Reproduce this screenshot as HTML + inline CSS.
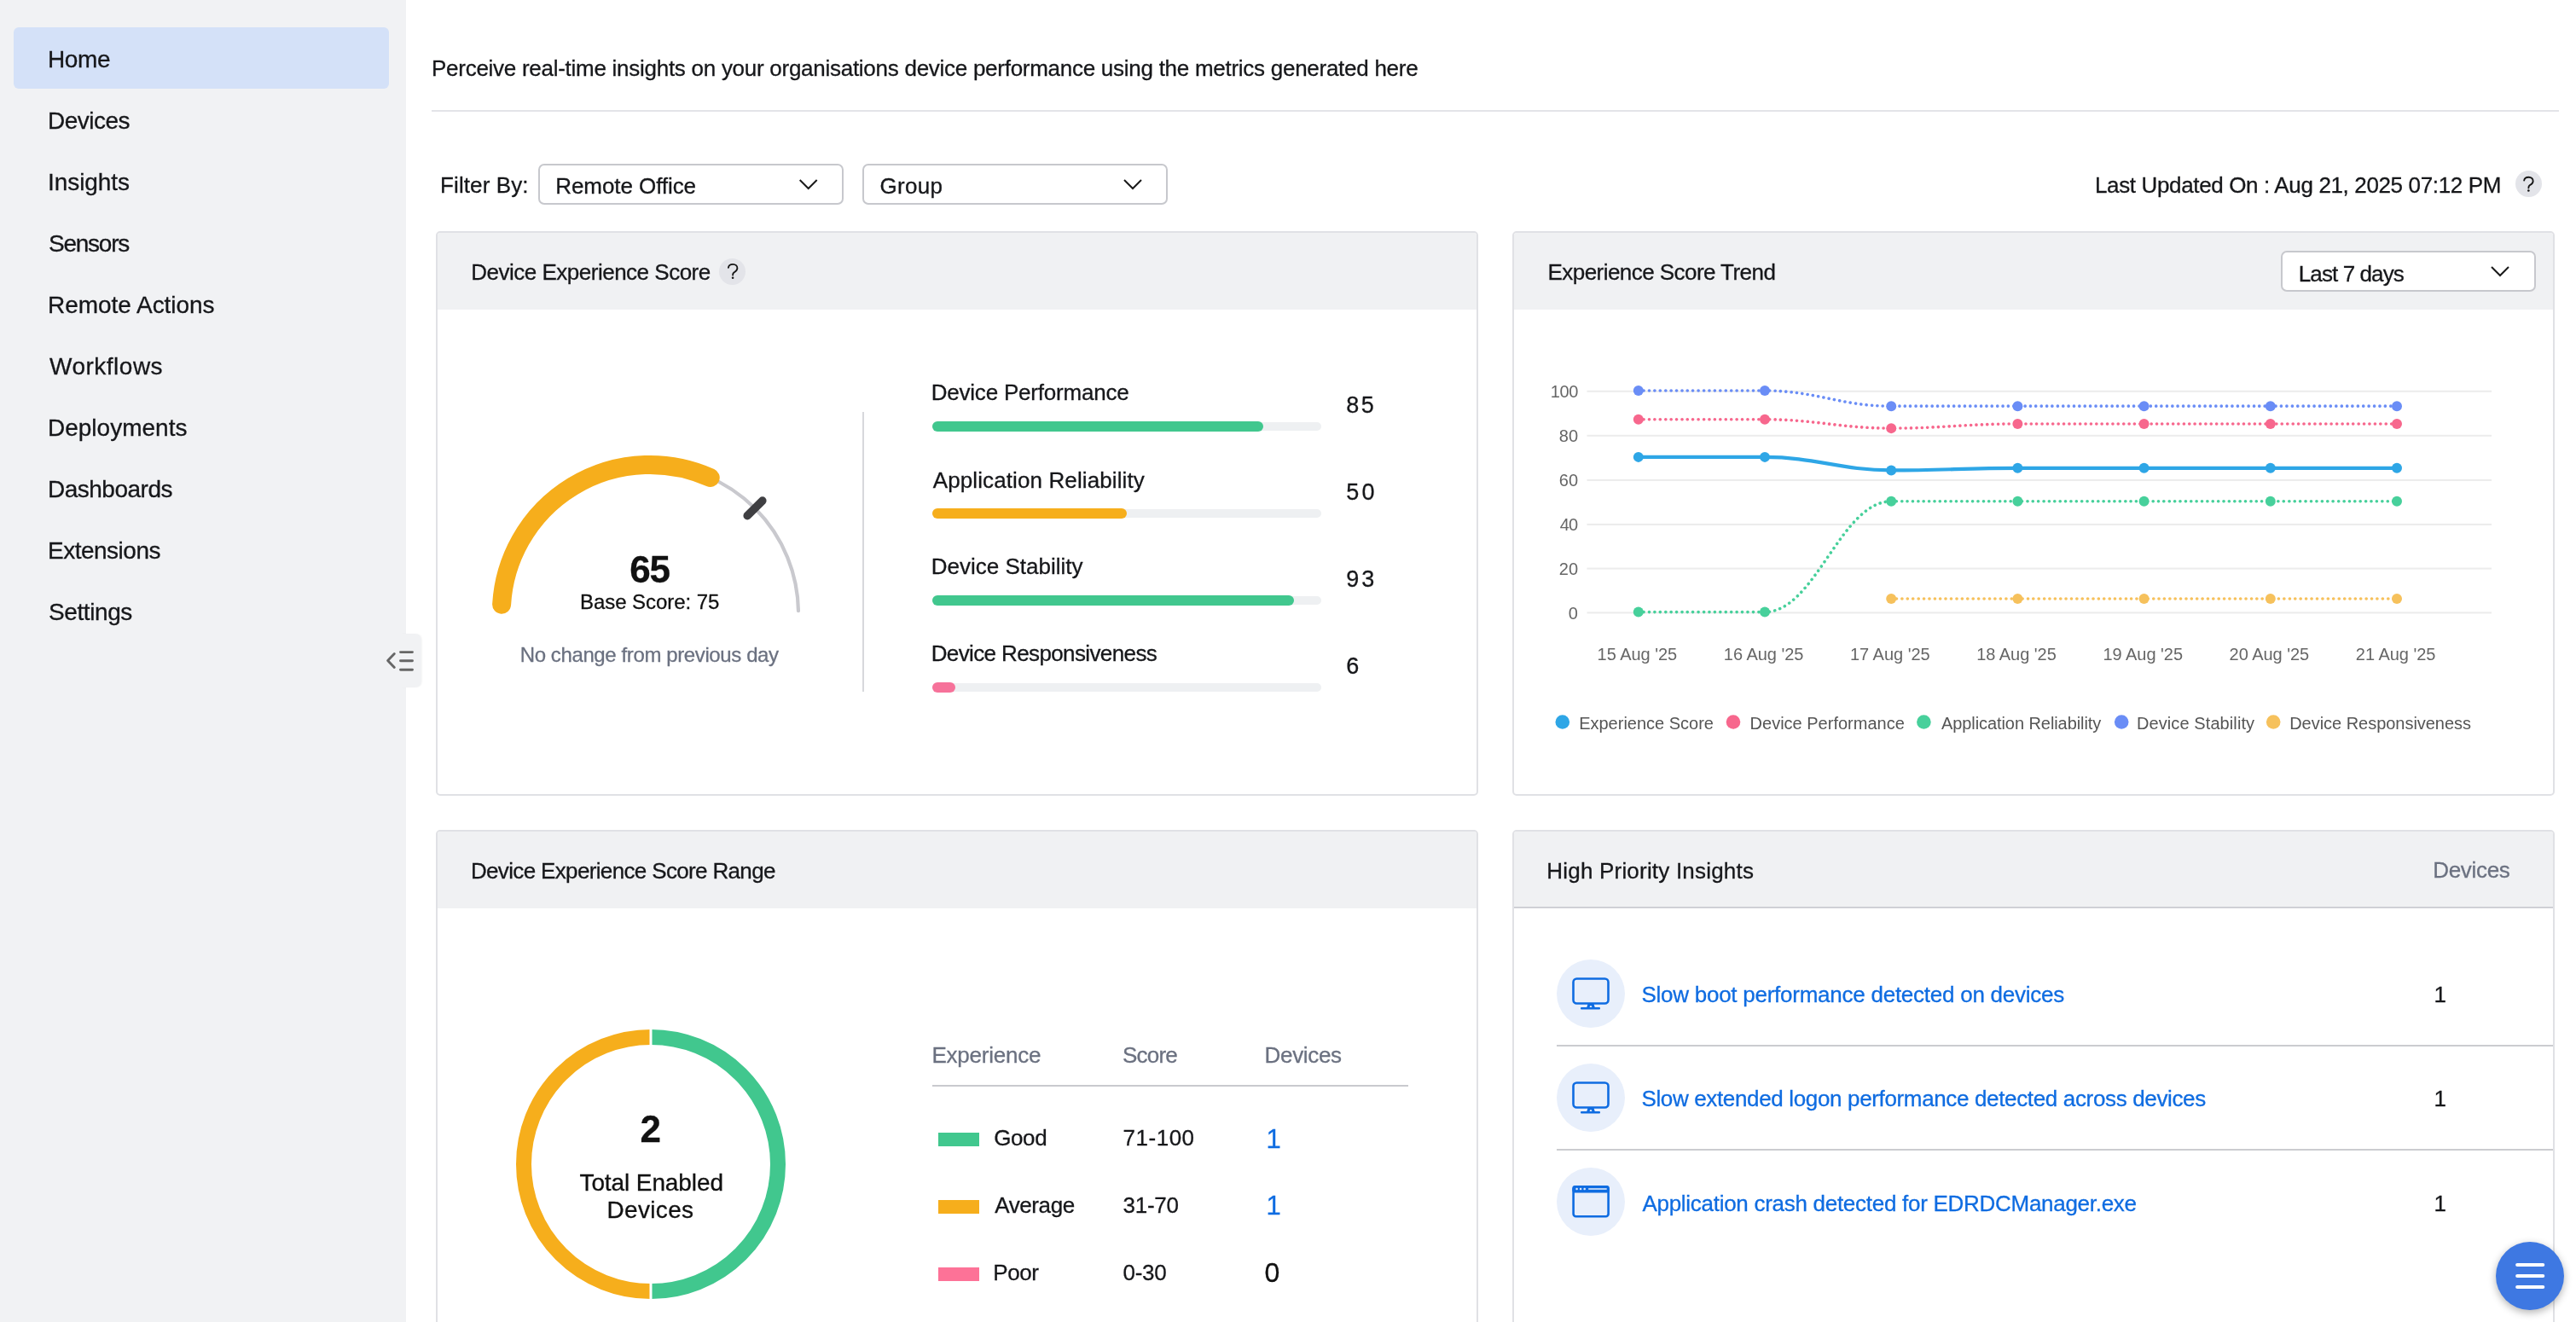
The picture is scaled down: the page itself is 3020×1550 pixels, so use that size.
<!DOCTYPE html>
<html><head><meta charset="utf-8"><title>Dashboard</title>
<style>
*{box-sizing:border-box;margin:0;padding:0}
html,body{width:3020px;height:1550px;overflow:hidden;background:#fff;font-family:"Liberation Sans", sans-serif}
.t{position:absolute;white-space:nowrap}
.a{position:absolute}
.card{position:absolute;border:2px solid #e0e1e5;border-radius:5px;background:#fff;overflow:hidden}
.hdr{position:absolute;left:0;top:0;right:0;background:#f0f1f3}
.dd{position:absolute;border:2px solid #c7c8cd;border-radius:7px;background:#fff}
.q{position:absolute;border-radius:50%;background:#e3e4e9;font-size:24px;line-height:31px;text-align:center;color:#222;width:31px;height:31px}
.track{position:absolute;height:10px;border-radius:5px;background:#eef0f2}
.fill{position:absolute;height:12px;border-radius:6px}
svg{position:absolute;left:0;top:0}
</style></head><body>
<!-- sidebar -->
<div class=a style="left:0;top:0;width:476px;height:1550px;background:#f1f2f4"></div>
<div class=a style="left:16px;top:32px;width:440px;height:72px;border-radius:6px;background:#d4e1f8"></div>
<div class=a style="left:470px;top:743px;width:24px;height:63px;border-radius:0 7px 7px 0;background:#f1f2f4;box-shadow:1px 0 2px rgba(0,0,0,0.04)"></div>
<!-- top line -->
<div class=a style="left:506px;top:129px;width:2494px;height:2px;background:#e3e4e8"></div>
<!-- dropdowns -->
<div class=dd style="left:631px;top:192px;width:358px;height:48px"></div>
<div class=dd style="left:1010.5px;top:191.5px;width:358.5px;height:48.5px"></div>
<div class=q style="left:2948.5px;top:200.3px"></div>
<!-- cards -->
<div class=card style="left:511px;top:271px;width:1222px;height:662px"><div class=hdr style="height:90px"></div></div>
<div class=card style="left:1773px;top:271px;width:1222px;height:662px"><div class=hdr style="height:90px"></div></div>
<div class=card style="left:511px;top:973px;width:1222px;height:600px"><div class=hdr style="height:90px"></div></div>
<div class=card style="left:1773px;top:973px;width:1222px;height:600px"><div class=hdr style="height:90px;border-bottom:2px solid #cfd0d5"></div></div>
<div class=dd style="left:2674px;top:293.5px;width:298.5px;height:48.5px"></div>
<div class=q style="left:843.2px;top:302.5px"></div>
<!-- divider in card1 -->
<div class=a style="left:1011px;top:483px;width:2px;height:328px;background:#d7d8dc"></div>
<!-- progress bars -->
<div class=track style="left:1093px;top:495px;width:456px"></div><div class=fill style="left:1093px;top:494px;width:388px;background:#41c78e"></div>
<div class=track style="left:1093px;top:597px;width:456px"></div><div class=fill style="left:1093px;top:596px;width:228px;background:#f6ae1c"></div>
<div class=track style="left:1093px;top:699px;width:456px"></div><div class=fill style="left:1093px;top:698px;width:424px;background:#41c78e"></div>
<div class=track style="left:1093px;top:801px;width:456px"></div><div class=fill style="left:1093px;top:800px;width:27px;background:#f6729a"></div>
<!-- table -->
<div class=a style="left:1093px;top:1272px;width:558px;height:2px;background:#c9cace"></div>
<div class=a style="left:1100px;top:1328px;width:48px;height:16px;background:#41c78e"></div>
<div class=a style="left:1100px;top:1407px;width:48px;height:16px;background:#f6ae1c"></div>
<div class=a style="left:1100px;top:1486px;width:48px;height:16px;background:#fd7297"></div>
<!-- insights -->
<div class=a style="left:1825px;top:1125px;width:80px;height:80px;border-radius:50%;background:#e8effb"></div>
<div class=a style="left:1825px;top:1247px;width:80px;height:80px;border-radius:50%;background:#e8effb"></div>
<div class=a style="left:1825px;top:1369px;width:80px;height:80px;border-radius:50%;background:#e8effb"></div>
<div class=a style="left:1825px;top:1225px;width:1168px;height:2px;background:#cbccd0"></div>
<div class=a style="left:1825px;top:1347px;width:1168px;height:2px;background:#cbccd0"></div>
<!-- FAB -->
<div class=a style="left:2926.2px;top:1455.8px;width:80px;height:80px;border-radius:50%;background:#3e78e2;box-shadow:0 3px 10px rgba(0,0,0,0.3)"></div>
<svg width="3020" height="1550" viewBox="0 0 3020 1550">
<path d='M937.7,211 L947.7,221 L957.7,211' fill='none' stroke='#1a1a1a' stroke-width='2'/>
<path d='M1318,211 L1328,221 L1338,211' fill='none' stroke='#1a1a1a' stroke-width='2'/>
<path d='M2921,313 L2931,323 L2941,313' fill='none' stroke='#1a1a1a' stroke-width='2'/>
<path d='M853.90,313.80 C854.20,311.20 856.60,309.90 859.30,309.90 C862.40,309.90 864.40,311.90 864.40,314.60 C864.40,317.40 861.90,318.40 860.40,319.50 C859.30,320.30 859.10,321.10 859.10,322.60' fill='none' stroke='#151515' stroke-width='1.85' stroke-linecap='round'/><circle cx='859.10' cy='325.70' r='1.3' fill='#151515'/>
<path d='M2959.15,211.60 C2959.45,209.00 2961.85,207.70 2964.55,207.70 C2967.65,207.70 2969.65,209.70 2969.65,212.40 C2969.65,215.20 2967.15,216.20 2965.65,217.30 C2964.55,218.10 2964.35,218.90 2964.35,220.40' fill='none' stroke='#151515' stroke-width='1.85' stroke-linecap='round'/><circle cx='2964.35' cy='223.50' r='1.3' fill='#151515'/>
<!-- collapse icon -->
<path d='M462.3,766.6 L454.6,774.4 L462.3,782.4' fill='none' stroke='#666' stroke-width='2.9' stroke-linecap='round' stroke-linejoin='round'/>
<path d='M469.5,764.6 H483.5 M469.5,774.8 H483.5 M469.5,785.2 H483.5' fill='none' stroke='#666' stroke-width='2.9' stroke-linecap='round'/>

<path d='M588.04,709.89 A174.1,174.1 0 0 1 935.98,716.27' fill='none' stroke='#c9c9ce' stroke-width='4.2' stroke-linecap='round'/>
<path d='M588.11,708.67 A174.1,174.1 0 0 1 832.71,559.95' fill='none' stroke='#f6ae1c' stroke-width='22' stroke-linecap='round'/>
<line x1='876.17' y1='604.73' x2='893.85' y2='587.05' stroke='#3f3f42' stroke-width='9.5' stroke-linecap='round'/>

<rect x='1860.5' y='457.8' width='1060.5' height='2' fill='#ececec'/>
<rect x='1860.5' y='509.8' width='1060.5' height='2' fill='#ececec'/>
<rect x='1860.5' y='561.9' width='1060.5' height='2' fill='#ececec'/>
<rect x='1860.5' y='613.9' width='1060.5' height='2' fill='#ececec'/>
<rect x='1860.5' y='665.6' width='1060.5' height='2' fill='#ececec'/>
<rect x='1860.5' y='717.4' width='1060.5' height='2' fill='#ececec'/>
<path d='M1920.80,458.00 C1920.80,458.00 2009.72,458.00 2069.00,458.00 C2128.28,458.00 2157.92,476.17 2217.20,476.17 C2276.48,476.17 2306.12,476.17 2365.40,476.17 C2424.68,476.17 2454.32,476.17 2513.60,476.17 C2572.88,476.17 2602.52,476.17 2661.80,476.17 C2721.08,476.17 2810.00,476.17 2810.00,476.17' fill='none' stroke='#6a8df6' stroke-width='3.6' stroke-linecap='round' stroke-dasharray='0.1 6.3'/>
<circle cx='1920.80' cy='458.00' r='6' fill='#6a8df6'/>
<circle cx='2069.00' cy='458.00' r='6' fill='#6a8df6'/>
<circle cx='2217.20' cy='476.17' r='6' fill='#6a8df6'/>
<circle cx='2365.40' cy='476.17' r='6' fill='#6a8df6'/>
<circle cx='2513.60' cy='476.17' r='6' fill='#6a8df6'/>
<circle cx='2661.80' cy='476.17' r='6' fill='#6a8df6'/>
<circle cx='2810.00' cy='476.17' r='6' fill='#6a8df6'/>
<path d='M1920.80,491.75 C1920.80,491.75 2009.72,491.75 2069.00,491.75 C2128.28,491.75 2157.92,502.13 2217.20,502.13 C2276.48,502.13 2306.12,496.94 2365.40,496.94 C2424.68,496.94 2454.32,496.94 2513.60,496.94 C2572.88,496.94 2602.52,496.94 2661.80,496.94 C2721.08,496.94 2810.00,496.94 2810.00,496.94' fill='none' stroke='#f7678d' stroke-width='3.6' stroke-linecap='round' stroke-dasharray='0.1 6.3'/>
<circle cx='1920.80' cy='491.75' r='6' fill='#f7678d'/>
<circle cx='2069.00' cy='491.75' r='6' fill='#f7678d'/>
<circle cx='2217.20' cy='502.13' r='6' fill='#f7678d'/>
<circle cx='2365.40' cy='496.94' r='6' fill='#f7678d'/>
<circle cx='2513.60' cy='496.94' r='6' fill='#f7678d'/>
<circle cx='2661.80' cy='496.94' r='6' fill='#f7678d'/>
<circle cx='2810.00' cy='496.94' r='6' fill='#f7678d'/>
<path d='M1920.80,535.88 C1920.80,535.88 2009.72,535.88 2069.00,535.88 C2128.28,535.88 2157.92,551.46 2217.20,551.46 C2276.48,551.46 2306.12,548.86 2365.40,548.86 C2424.68,548.86 2454.32,548.86 2513.60,548.86 C2572.88,548.86 2602.52,548.86 2661.80,548.86 C2721.08,548.86 2810.00,548.86 2810.00,548.86' fill='none' stroke='#2ea6e6' stroke-width='4.2'/>
<circle cx='1920.80' cy='535.88' r='6' fill='#2ea6e6'/>
<circle cx='2069.00' cy='535.88' r='6' fill='#2ea6e6'/>
<circle cx='2217.20' cy='551.46' r='6' fill='#2ea6e6'/>
<circle cx='2365.40' cy='548.86' r='6' fill='#2ea6e6'/>
<circle cx='2513.60' cy='548.86' r='6' fill='#2ea6e6'/>
<circle cx='2661.80' cy='548.86' r='6' fill='#2ea6e6'/>
<circle cx='2810.00' cy='548.86' r='6' fill='#2ea6e6'/>
<path d='M1920.80,717.60 C1920.80,717.60 2009.72,717.60 2069.00,717.60 C2128.28,717.60 2157.92,587.80 2217.20,587.80 C2276.48,587.80 2306.12,587.80 2365.40,587.80 C2424.68,587.80 2454.32,587.80 2513.60,587.80 C2572.88,587.80 2602.52,587.80 2661.80,587.80 C2721.08,587.80 2810.00,587.80 2810.00,587.80' fill='none' stroke='#47d09b' stroke-width='3.6' stroke-linecap='round' stroke-dasharray='0.1 6.3'/>
<circle cx='1920.80' cy='717.60' r='6' fill='#47d09b'/>
<circle cx='2069.00' cy='717.60' r='6' fill='#47d09b'/>
<circle cx='2217.20' cy='587.80' r='6' fill='#47d09b'/>
<circle cx='2365.40' cy='587.80' r='6' fill='#47d09b'/>
<circle cx='2513.60' cy='587.80' r='6' fill='#47d09b'/>
<circle cx='2661.80' cy='587.80' r='6' fill='#47d09b'/>
<circle cx='2810.00' cy='587.80' r='6' fill='#47d09b'/>
<path d='M2217.20,702.02 C2217.20,702.02 2306.12,702.02 2365.40,702.02 C2424.68,702.02 2454.32,702.02 2513.60,702.02 C2572.88,702.02 2602.52,702.02 2661.80,702.02 C2721.08,702.02 2810.00,702.02 2810.00,702.02' fill='none' stroke='#f6c15c' stroke-width='3.6' stroke-linecap='round' stroke-dasharray='0.1 6.3'/>
<circle cx='2217.20' cy='702.02' r='6' fill='#f6c15c'/>
<circle cx='2365.40' cy='702.02' r='6' fill='#f6c15c'/>
<circle cx='2513.60' cy='702.02' r='6' fill='#f6c15c'/>
<circle cx='2661.80' cy='702.02' r='6' fill='#f6c15c'/>
<circle cx='2810.00' cy='702.02' r='6' fill='#f6c15c'/>
<circle cx='1831.8' cy='846.5' r='8.3' fill='#2ea6e6'/>
<circle cx='2032' cy='846.5' r='8.3' fill='#f7678d'/>
<circle cx='2255.4' cy='846.5' r='8.3' fill='#47d09b'/>
<circle cx='2487.2' cy='846.5' r='8.3' fill='#6a8df6'/>
<circle cx='2665.2' cy='846.5' r='8.3' fill='#f6c15c'/>

<path d='M763,1216 A149,149 0 0 1 763,1514' fill='none' stroke='#41c78e' stroke-width='18'/>
<path d='M763,1514 A149,149 0 0 1 763,1216' fill='none' stroke='#f6ae1c' stroke-width='18'/>
<rect x='761.5' y='1204' width='3' height='24' fill='#fff'/>
<rect x='761.5' y='1502' width='3' height='24' fill='#fff'/>

<!-- monitor icons -->
<g fill='none' stroke='#0f6ce1' stroke-width='2.6'>
<rect x='1844.5' y='1147.5' width='41' height='29' rx='4'/>
<rect x='1844.5' y='1269.5' width='41' height='29' rx='4'/>
<rect x='1844.6' y='1391.2' width='41' height='35' rx='3'/>
</g>
<g fill='#0f6ce1'>
<rect x='1853' y='1181' width='23' height='2.6' rx='1'/>
<path d='M1861.5,1177 L1868.5,1177 L1870,1182 L1860,1182Z M1864.2,1179.2 L1865.8,1179.2 L1866.4,1181 L1863.6,1181Z' fill-rule='evenodd'/>
<rect x='1853' y='1303' width='23' height='2.6' rx='1'/>
<path d='M1861.5,1299 L1868.5,1299 L1870,1304 L1860,1304Z M1864.2,1301.2 L1865.8,1301.2 L1866.4,1303 L1863.6,1303Z' fill-rule='evenodd'/>
<rect x='1843.3' y='1390' width='43.5' height='8.5' rx='3'/>
</g>
<g fill='#dbe8fb'>
<circle cx='1848.6' cy='1394' r='1.3'/><circle cx='1853.1' cy='1394' r='1.3'/><circle cx='1857.7' cy='1394' r='1.3'/>
<rect x='1862.2' y='1393.2' width='21.5' height='1.6'/>
</g>
<!-- FAB lines -->
<path d='M2951.2,1483 H2981.2 M2951.2,1496 H2981.2 M2951.2,1509 H2981.2' stroke='#fff' stroke-width='4.2' stroke-linecap='round'/>
</svg>
<div style="position:absolute;left:0;top:0;width:3020px;height:1550px;will-change:transform">
<div class=t style="left:56.0px;top:56px;font-size:28px;line-height:28px;color:#16171a;letter-spacing:-0.37px;-webkit-text-stroke:0.3px #16171a">Home</div>
<div class=t style="left:56.0px;top:128px;font-size:28px;line-height:28px;color:#16171a;letter-spacing:-0.50px;-webkit-text-stroke:0.3px #16171a">Devices</div>
<div class=t style="left:56.0px;top:200px;font-size:28px;line-height:28px;color:#16171a;letter-spacing:-0.07px;-webkit-text-stroke:0.3px #16171a">Insights</div>
<div class=t style="left:57.0px;top:272px;font-size:28px;line-height:28px;color:#16171a;letter-spacing:-1.25px;-webkit-text-stroke:0.3px #16171a">Sensors</div>
<div class=t style="left:56.0px;top:344px;font-size:28px;line-height:28px;color:#16171a;letter-spacing:-0.04px;-webkit-text-stroke:0.3px #16171a">Remote Actions</div>
<div class=t style="left:58.0px;top:416px;font-size:28px;line-height:28px;color:#16171a;letter-spacing:0.50px;-webkit-text-stroke:0.3px #16171a">Workflows</div>
<div class=t style="left:56.0px;top:488px;font-size:28px;line-height:28px;color:#16171a;-webkit-text-stroke:0.3px #16171a">Deployments</div>
<div class=t style="left:56.0px;top:560px;font-size:28px;line-height:28px;color:#16171a;letter-spacing:-0.50px;-webkit-text-stroke:0.3px #16171a">Dashboards</div>
<div class=t style="left:56.0px;top:632px;font-size:28px;line-height:28px;color:#16171a;letter-spacing:-0.50px;-webkit-text-stroke:0.3px #16171a">Extensions</div>
<div class=t style="left:57.0px;top:704px;font-size:28px;line-height:28px;color:#16171a;letter-spacing:-0.41px;-webkit-text-stroke:0.3px #16171a">Settings</div>
<div class=t style="left:506.0px;top:67px;font-size:26px;line-height:26px;color:#16171a;letter-spacing:-0.27px;-webkit-text-stroke:0.3px #16171a">Perceive real-time insights on your organisations device performance using the metrics generated here</div>
<div class=t style="left:516.0px;top:204px;font-size:26px;line-height:26px;color:#16171a;letter-spacing:0.11px;-webkit-text-stroke:0.3px #16171a">Filter By:</div>
<div class=t style="left:651.3px;top:205px;font-size:26px;line-height:26px;color:#16171a;letter-spacing:-0.08px;-webkit-text-stroke:0.3px #16171a">Remote Office</div>
<div class=t style="left:1031.6px;top:205px;font-size:26px;line-height:26px;color:#16171a;letter-spacing:0.30px;-webkit-text-stroke:0.3px #16171a">Group</div>
<div class=t style="left:2456.0px;top:204px;font-size:26px;line-height:26px;color:#16171a;letter-spacing:-0.36px;-webkit-text-stroke:0.3px #16171a">Last Updated On : Aug 21, 2025 07:12 PM</div>
<div class=t style="left:552.3px;top:306px;font-size:26px;line-height:26px;color:#16171a;letter-spacing:-0.50px;-webkit-text-stroke:0.3px #16171a">Device Experience Score</div>
<div class=t style="left:1814.5px;top:306px;font-size:26px;line-height:26px;color:#16171a;letter-spacing:-0.55px;-webkit-text-stroke:0.3px #16171a">Experience Score Trend</div>
<div class=t style="left:2694.8px;top:308px;font-size:26px;line-height:26px;color:#16171a;letter-spacing:-0.90px;-webkit-text-stroke:0.3px #16171a">Last 7 days</div>
<div class=t style="left:551.9px;top:1008px;font-size:26px;line-height:26px;color:#16171a;letter-spacing:-0.65px;-webkit-text-stroke:0.3px #16171a">Device Experience Score Range</div>
<div class=t style="left:1813.3px;top:1008px;font-size:26px;line-height:26px;color:#16171a;letter-spacing:0.20px;-webkit-text-stroke:0.3px #16171a">High Priority Insights</div>
<div class=t style="left:2852.3px;top:1007px;font-size:26px;line-height:26px;color:#6b7180;letter-spacing:-0.33px;-webkit-text-stroke:0.3px #6b7180">Devices</div>
<div class=t style="left:738.2px;top:646px;font-size:44px;line-height:44px;color:#111;font-weight:700;letter-spacing:-1.20px;-webkit-text-stroke:0.3px #111">65</div>
<div class=t style="left:680.0px;top:694px;font-size:24px;line-height:24px;color:#111;letter-spacing:-0.05px;-webkit-text-stroke:0.3px #111">Base Score: 75</div>
<div class=t style="left:609.7px;top:756px;font-size:24px;line-height:24px;color:#6b7180;letter-spacing:-0.39px;-webkit-text-stroke:0.3px #6b7180">No change from previous day</div>
<div class=t style="left:1091.7px;top:447px;font-size:26px;line-height:26px;color:#16171a;letter-spacing:-0.21px;-webkit-text-stroke:0.3px #16171a">Device Performance</div>
<div class=t style="left:1578.3px;top:462px;font-size:27px;line-height:27px;color:#16171a;letter-spacing:2.40px;-webkit-text-stroke:0.3px #16171a">85</div>
<div class=t style="left:1093.7px;top:550px;font-size:26px;line-height:26px;color:#16171a;letter-spacing:0.11px;-webkit-text-stroke:0.3px #16171a">Application Reliability</div>
<div class=t style="left:1578.3px;top:564px;font-size:27px;line-height:27px;color:#16171a;letter-spacing:3.20px;-webkit-text-stroke:0.3px #16171a">50</div>
<div class=t style="left:1091.7px;top:651px;font-size:26px;line-height:26px;color:#16171a;letter-spacing:0.01px;-webkit-text-stroke:0.3px #16171a">Device Stability</div>
<div class=t style="left:1578.3px;top:666px;font-size:27px;line-height:27px;color:#16171a;letter-spacing:3.00px;-webkit-text-stroke:0.3px #16171a">93</div>
<div class=t style="left:1091.7px;top:753px;font-size:26px;line-height:26px;color:#16171a;letter-spacing:-0.62px;-webkit-text-stroke:0.3px #16171a">Device Responsiveness</div>
<div class=t style="left:1578.3px;top:768px;font-size:27px;line-height:27px;color:#16171a;-webkit-text-stroke:0.3px #16171a">6</div>
<div class=t style="left:1817.8px;top:449px;font-size:20px;line-height:20px;color:#666666;letter-spacing:-0.40px">100</div>
<div class=t style="left:1827.8px;top:501px;font-size:20px;line-height:20px;color:#666666">80</div>
<div class=t style="left:1827.8px;top:553px;font-size:20px;line-height:20px;color:#666666">60</div>
<div class=t style="left:1828.8px;top:605px;font-size:20px;line-height:20px;color:#666666;letter-spacing:-1.00px">40</div>
<div class=t style="left:1827.8px;top:657px;font-size:20px;line-height:20px;color:#666666">20</div>
<div class=t style="left:1838.8px;top:709px;font-size:20px;line-height:20px;color:#666666">0</div>
<div class=t style="left:1872.6px;top:757px;font-size:20px;line-height:20px;color:#666666;letter-spacing:-0.03px">15 Aug &#39;25</div>
<div class=t style="left:2020.8px;top:757px;font-size:20px;line-height:20px;color:#666666;letter-spacing:-0.03px">16 Aug &#39;25</div>
<div class=t style="left:2169.0px;top:757px;font-size:20px;line-height:20px;color:#666666;letter-spacing:-0.03px">17 Aug &#39;25</div>
<div class=t style="left:2317.2px;top:757px;font-size:20px;line-height:20px;color:#666666;letter-spacing:-0.03px">18 Aug &#39;25</div>
<div class=t style="left:2465.4px;top:757px;font-size:20px;line-height:20px;color:#666666;letter-spacing:-0.03px">19 Aug &#39;25</div>
<div class=t style="left:2613.6px;top:757px;font-size:20px;line-height:20px;color:#666666;letter-spacing:-0.03px">20 Aug &#39;25</div>
<div class=t style="left:2761.8px;top:757px;font-size:20px;line-height:20px;color:#666666;letter-spacing:-0.03px">21 Aug &#39;25</div>
<div class=t style="left:1851.2px;top:838px;font-size:20px;line-height:20px;color:#555555;letter-spacing:-0.01px">Experience Score</div>
<div class=t style="left:2051.6px;top:838px;font-size:20px;line-height:20px;color:#555555">Device Performance</div>
<div class=t style="left:2275.9px;top:838px;font-size:20px;line-height:20px;color:#555555;letter-spacing:-0.07px">Application Reliability</div>
<div class=t style="left:2505.0px;top:838px;font-size:20px;line-height:20px;color:#555555;letter-spacing:0.09px">Device Stability</div>
<div class=t style="left:2684.2px;top:838px;font-size:20px;line-height:20px;color:#555555;letter-spacing:-0.03px">Device Responsiveness</div>
<div class=t style="left:750.4px;top:1302px;font-size:44px;line-height:44px;color:#111;font-weight:700;-webkit-text-stroke:0.3px #111">2</div>
<div class=t style="left:679.5px;top:1373px;font-size:28px;line-height:28px;color:#111;letter-spacing:-0.10px;-webkit-text-stroke:0.3px #111">Total Enabled</div>
<div class=t style="left:711.5px;top:1405px;font-size:28px;line-height:28px;color:#111;letter-spacing:0.33px;-webkit-text-stroke:0.3px #111">Devices</div>
<div class=t style="left:1092.4px;top:1224px;font-size:26px;line-height:26px;color:#6b7180;letter-spacing:-0.22px;-webkit-text-stroke:0.3px #6b7180">Experience</div>
<div class=t style="left:1315.9px;top:1224px;font-size:26px;line-height:26px;color:#6b7180;letter-spacing:-0.75px;-webkit-text-stroke:0.3px #6b7180">Score</div>
<div class=t style="left:1482.6px;top:1224px;font-size:26px;line-height:26px;color:#6b7180;letter-spacing:-0.33px;-webkit-text-stroke:0.3px #6b7180">Devices</div>
<div class=t style="left:1165.2px;top:1321px;font-size:26px;line-height:26px;color:#16171a;letter-spacing:-0.40px;-webkit-text-stroke:0.3px #16171a">Good</div>
<div class=t style="left:1316.6px;top:1321px;font-size:26px;line-height:26px;color:#16171a;letter-spacing:0.50px;-webkit-text-stroke:0.3px #16171a">71-100</div>
<div class=t style="left:1484.5px;top:1320px;font-size:31px;line-height:31px;color:#0f6ce1;-webkit-text-stroke:0.3px #0f6ce1">1</div>
<div class=t style="left:1166.2px;top:1400px;font-size:26px;line-height:26px;color:#16171a;letter-spacing:-0.40px;-webkit-text-stroke:0.3px #16171a">Average</div>
<div class=t style="left:1316.6px;top:1400px;font-size:26px;line-height:26px;color:#16171a;letter-spacing:-0.30px;-webkit-text-stroke:0.3px #16171a">31-70</div>
<div class=t style="left:1484.5px;top:1398px;font-size:31px;line-height:31px;color:#0f6ce1;-webkit-text-stroke:0.3px #0f6ce1">1</div>
<div class=t style="left:1164.2px;top:1479px;font-size:26px;line-height:26px;color:#16171a;letter-spacing:-0.40px;-webkit-text-stroke:0.3px #16171a">Poor</div>
<div class=t style="left:1316.6px;top:1479px;font-size:26px;line-height:26px;color:#16171a;letter-spacing:-0.30px;-webkit-text-stroke:0.3px #16171a">0-30</div>
<div class=t style="left:1482.5px;top:1476px;font-size:32px;line-height:32px;color:#111;-webkit-text-stroke:0.3px #111">0</div>
<div class=t style="left:1924.4px;top:1153px;font-size:26px;line-height:26px;color:#0f6ce1;letter-spacing:-0.25px;-webkit-text-stroke:0.3px #0f6ce1">Slow boot performance detected on devices</div>
<div class=t style="left:2853.4px;top:1153px;font-size:26px;line-height:26px;color:#16171a;-webkit-text-stroke:0.3px #16171a">1</div>
<div class=t style="left:1924.4px;top:1275px;font-size:26px;line-height:26px;color:#0f6ce1;letter-spacing:-0.35px;-webkit-text-stroke:0.3px #0f6ce1">Slow extended logon performance detected across devices</div>
<div class=t style="left:2853.4px;top:1275px;font-size:26px;line-height:26px;color:#16171a;-webkit-text-stroke:0.3px #16171a">1</div>
<div class=t style="left:1925.4px;top:1398px;font-size:26px;line-height:26px;color:#0f6ce1;letter-spacing:-0.28px;-webkit-text-stroke:0.3px #0f6ce1">Application crash detected for EDRDCManager.exe</div>
<div class=t style="left:2853.4px;top:1398px;font-size:26px;line-height:26px;color:#16171a;-webkit-text-stroke:0.3px #16171a">1</div>
</div>
</body></html>
